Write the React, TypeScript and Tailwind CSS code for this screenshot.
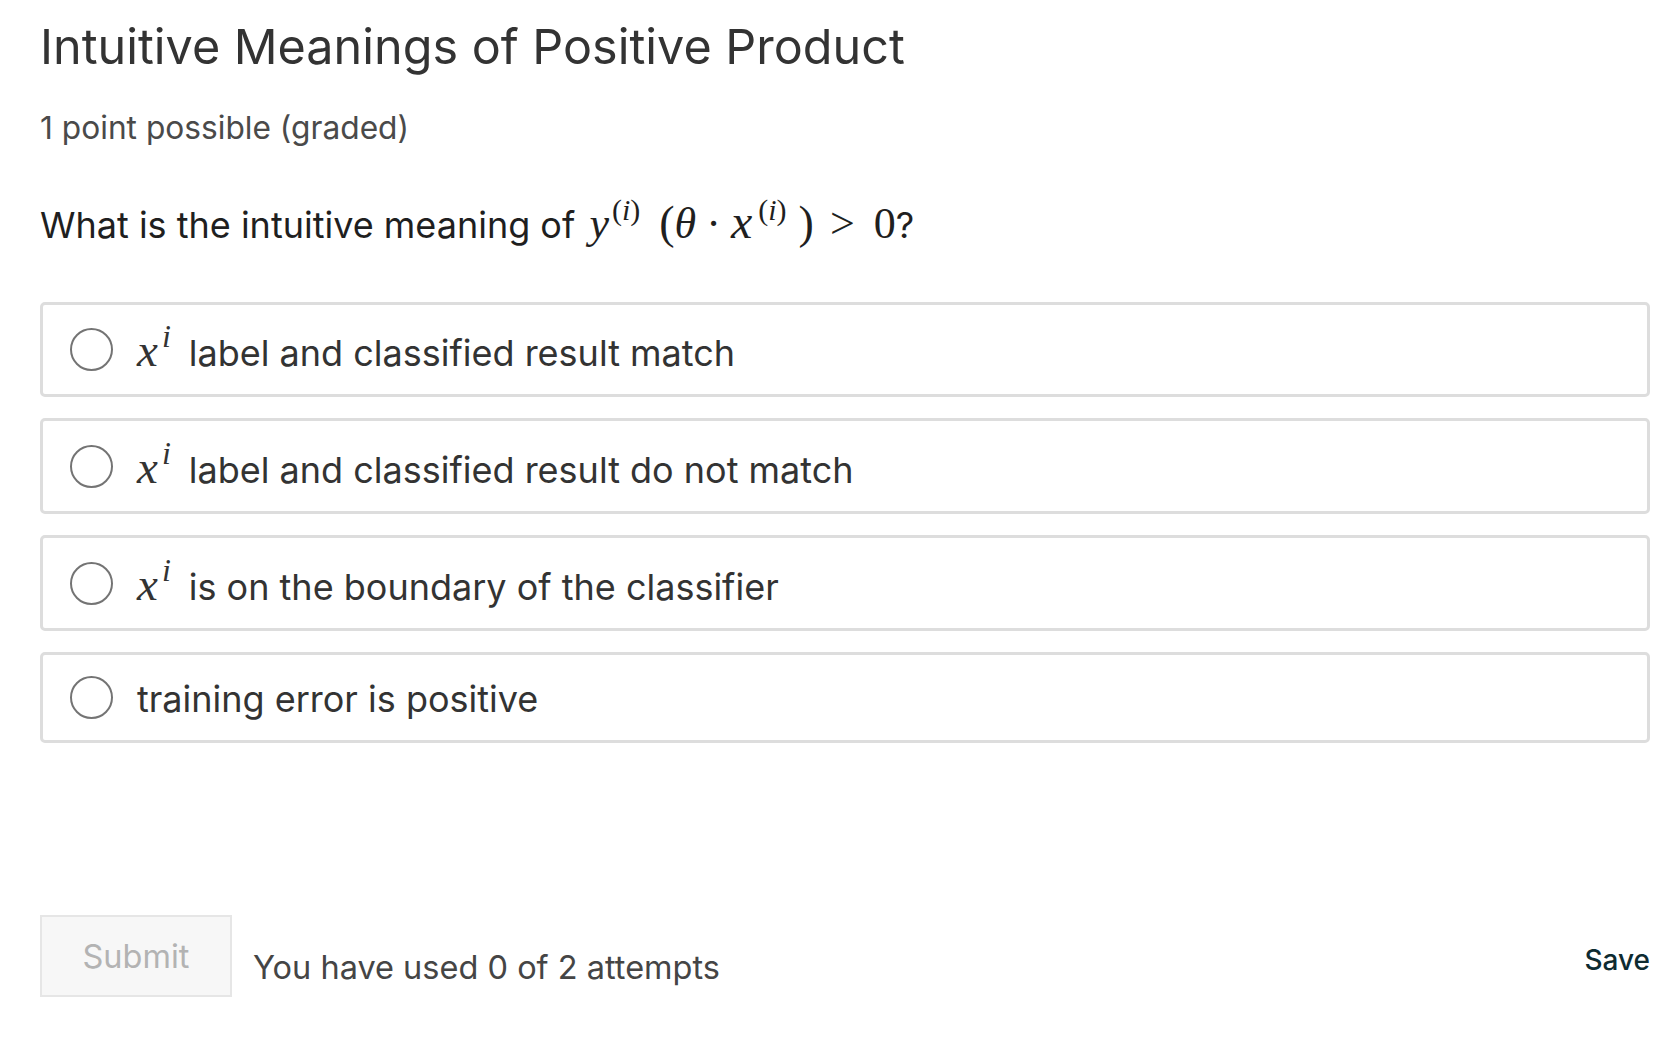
import React from "react";

type Option = {
  math: boolean;
  text: string;
  height: string;
};

const options: Option[] = [
  { math: true, text: "label and classified result match", height: "h-[95px]" },
  { math: true, text: "label and classified result do not match", height: "h-[96px]" },
  { math: true, text: "is on the boundary of the classifier", height: "h-[96px]" },
  { math: false, text: "training error is positive", height: "h-[91px]" },
];

// superscript "(i)" like MathJax renders it
const SupI = () => (
  <span className="relative -top-[18px] text-[30px] leading-none not-italic ml-[3px]">
    (<span className="italic">i</span>)
  </span>
);

const XI = () => (
  <span className="font-['Liberation_Serif',serif] italic text-[47px] leading-none mr-[18px]">
    x
    <span className="relative -top-[19px] text-[32px] leading-none ml-[4px]">i</span>
  </span>
);

const Radio = () => (
  <span className="w-[43px] h-[43px] rounded-full border-2 border-[#747474] bg-white shrink-0" />
);

export default function App() {
  return (
    <div className="min-h-screen bg-white pl-[40px] pr-[22px] pt-[18px] font-['Inter',sans-serif]">
      <h2 className="text-[48.5px] leading-[58px] text-[#333333] font-normal">
        Intuitive Meanings of Positive Product
      </h2>

      <div className="mt-[34px] text-[31.7px] leading-[36px] text-[#4a4a4a]">
        1 point possible (graded)
      </div>

      <p className="mt-[52px] text-[36px] leading-[48px] text-[#1f1f1f]">
        What is the intuitive meaning of{" "}
        <span className="font-['Liberation_Serif',serif] text-[44px] leading-none">
          <span className="italic ml-[4px]">y</span>
          <SupI />
          <span className="ml-[19px] text-[46px] leading-none">(</span>
          <span className="italic">θ</span>
          <span className="mx-[10px]">·</span>
          <span className="italic text-[48px]">x</span>
          <span className="ml-[3px]">
            <SupI />
          </span>
          <span className="ml-[12px] text-[46px] leading-none">)</span>
          <span className="ml-[16px] mr-[19px]">&gt;</span>
          <span>0</span>
        </span>
        ?
      </p>

      <div className="mt-[53px] flex flex-col gap-[21px]">
        {options.map((o) => (
          <label
            key={o.text}
            className={`flex items-center ${o.height} border-[3px] border-[#dddddd] rounded-[5px] pl-[27px] bg-white`}
          >
            <Radio />
            <span className="ml-[24px] pt-[2px] text-[36px] leading-[40px] text-[#333333] whitespace-nowrap">
              {o.math && <XI />}
              {o.text}
            </span>
          </label>
        ))}
      </div>

      <div className="mt-[172px] flex items-start">
        <button
          disabled
          className="w-[192px] h-[82px] border-2 border-[#e6e6e6] bg-[#f7f7f7] text-[32.5px] text-[#b3b3b3] pt-[2px]"
        >
          Submit
        </button>
        <span className="ml-[21px] mt-[33px] text-[32.5px] leading-[39px] text-[#454545]">
          You have used 0 of 2 attempts
        </span>
        <span className="ml-auto mt-[31px] text-[28px] leading-[28px] text-[#0e2b31] font-medium">
          Save
        </span>
      </div>
    </div>
  );
}
